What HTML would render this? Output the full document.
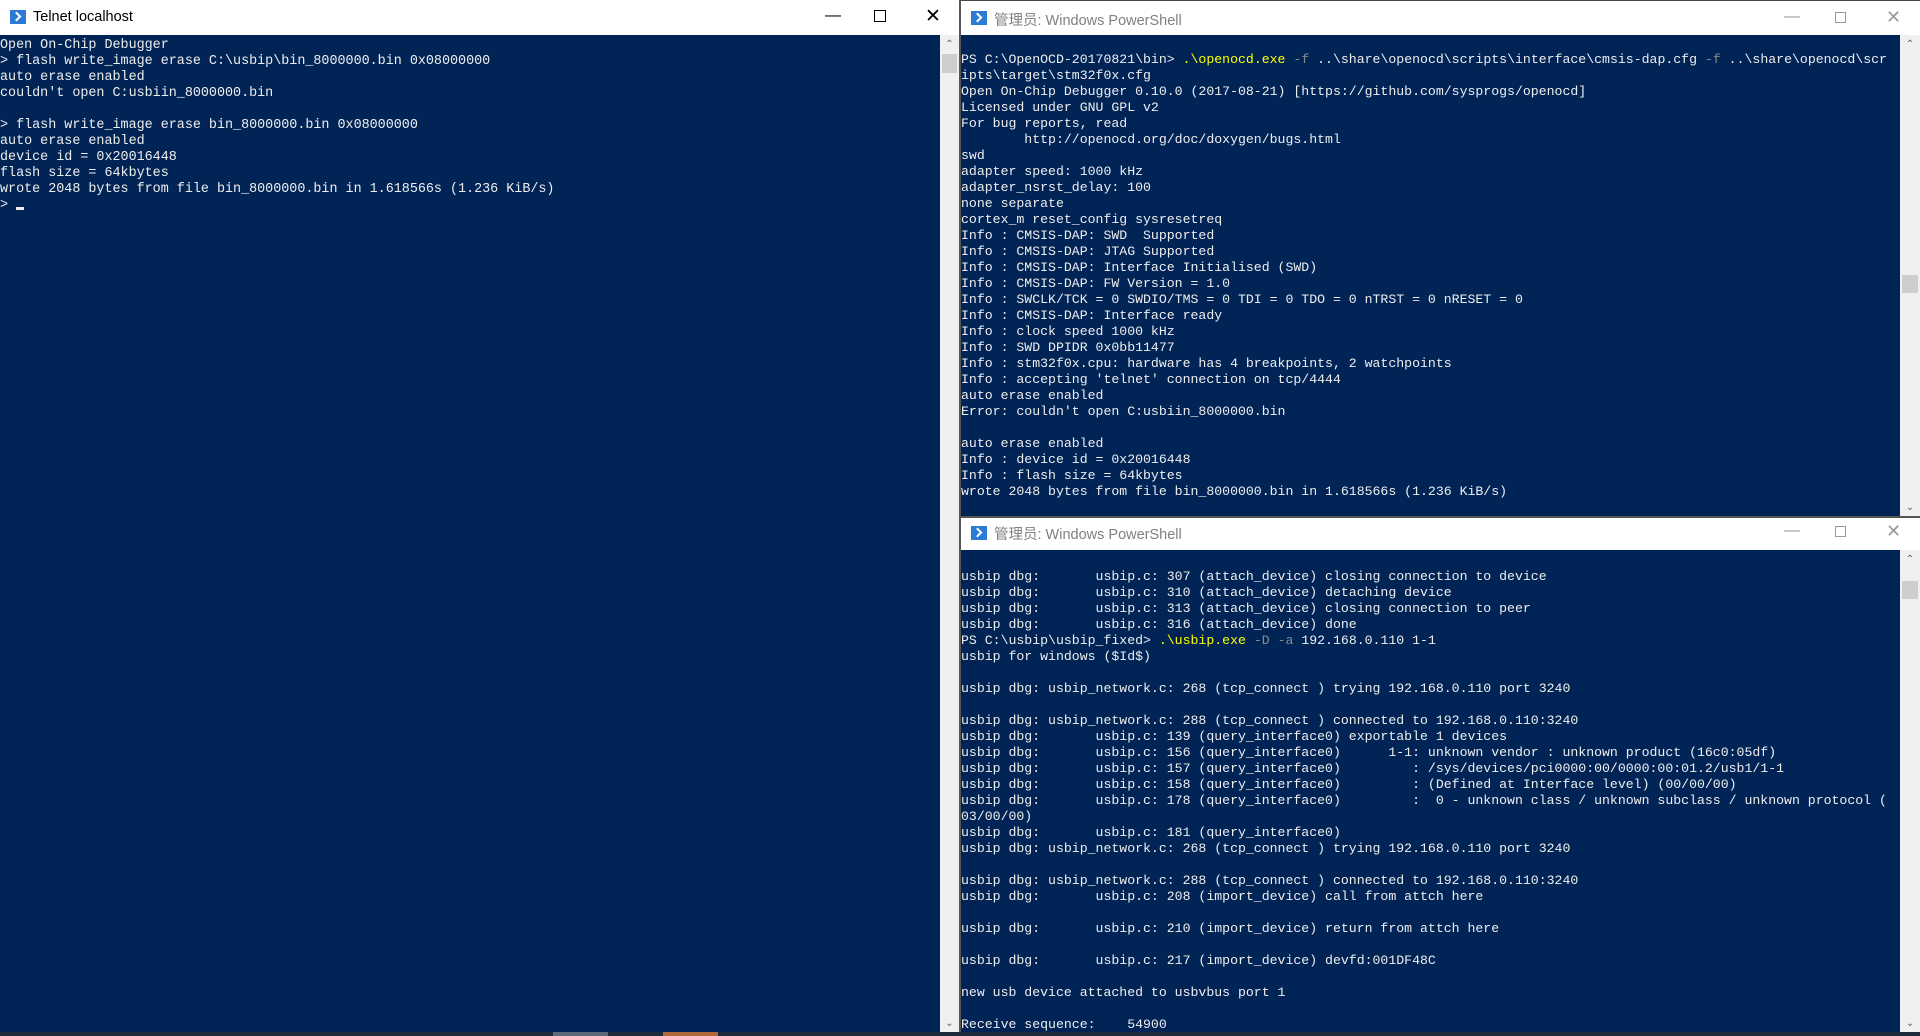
<!DOCTYPE html>
<html><head><meta charset="utf-8"><style>
*{margin:0;padding:0;box-sizing:border-box}
body{width:1920px;height:1036px;overflow:hidden;background:#2b2b2b;position:relative;font-family:"Liberation Sans","Noto Sans CJK SC",sans-serif}
.win{position:absolute;background:#fff}
.title{position:absolute;left:0;right:0;top:0;background:#fff;font-size:14.5px;color:#000}
.title .ic{position:absolute;left:10px;width:16px;height:14px;background:#2a7ad6}
.title .ic:after{content:"";position:absolute;left:3px;top:3px;width:5px;height:5px;border-right:2px solid #fff;border-bottom:2px solid #fff;transform:rotate(-45deg)}
.title .t{position:absolute;left:33px}
.ctl{position:absolute;font-size:16px;color:#000}
.cont{position:absolute;background:#012456;overflow:hidden}
pre{font-family:"Liberation Mono","Noto Sans CJK SC",monospace;color:#eee;line-height:16px;white-space:pre}
.sb{position:absolute;background:#f0f0f0}
.th{position:absolute;background:#cdcdcd;left:2px;right:2px}
.ar{position:absolute;left:0;right:0;text-align:center;font-size:10px;color:#606060}
.y{color:#ffff00}.g{color:#8a8a8a}
</style></head><body>
<div class="win" style="left:0;top:0;width:959px;height:1032px">
 <div class="title" style="height:35px">
  <div class="ic" style="top:10px"></div><div class="t" style="top:9px">Telnet localhost</div>
  <div class="ctl" style="left:825px;top:7px">&#8212;</div>
  <div class="ctl" style="left:874px;top:10px;width:12px;height:12px;border:1.5px solid #000"></div>
  <div class="ctl" style="left:925px;top:5px;font-size:19px">&#10005;</div>
 </div>
 <div class="cont" style="left:0;top:35px;width:940px;height:997px">
<pre style="font-size:13.4px;margin-top:3px">Open On-Chip Debugger
&gt; flash write_image erase C:\usbip\bin_8000000.bin 0x08000000
auto erase enabled
couldn't open C:usbiin_8000000.bin

&gt; flash write_image erase bin_8000000.bin 0x08000000
auto erase enabled
device id = 0x20016448
flash size = 64kbytes
wrote 2048 bytes from file bin_8000000.bin in 1.618566s (1.236 KiB/s)
&gt; <span style="display:inline-block;width:8px;height:3px;background:#eee;vertical-align:-2px"></span></pre>
 </div>
 <div class="sb" style="left:940px;top:35px;width:19px;height:997px">
  <div class="ar" style="top:4px">&#8963;</div><div class="th" style="top:19px;height:19px"></div>
  <div class="ar" style="bottom:3px">&#8964;</div>
 </div>
</div>
<div style="position:absolute;left:959px;top:0;width:2px;height:1032px;background:#555"></div>
<div class="win" style="left:961px;top:0;width:959px;height:516px">
 <div class="title" style="height:35px;border-top:1px solid #444">
  <div class="ic" style="top:10px"></div><div class="t" style="top:8px;color:#808080">管理员: Windows PowerShell</div>
  <div class="ctl" style="left:823px;top:7px;color:#999">&#8212;</div>
  <div class="ctl" style="left:874px;top:11px;width:11px;height:11px;border:1px solid #999"></div>
  <div class="ctl" style="left:925px;top:6px;font-size:18px;color:#999">&#10005;</div>
 </div>
 <div class="cont" style="left:0;top:35px;width:939px;height:481px">
<pre style="font-size:13.2px;margin-top:17px">PS C:\OpenOCD-20170821\bin&gt; <span class="y">.\openocd.exe</span> <span class="g">-f</span> ..\share\openocd\scripts\interface\cmsis-dap.cfg <span class="g">-f</span> ..\share\openocd\scr
ipts\target\stm32f0x.cfg
Open On-Chip Debugger 0.10.0 (2017-08-21) [https://github.com/sysprogs/openocd]
Licensed under GNU GPL v2
For bug reports, read
        http://openocd.org/doc/doxygen/bugs.html
swd
adapter speed: 1000 kHz
adapter_nsrst_delay: 100
none separate
cortex_m reset_config sysresetreq
Info : CMSIS-DAP: SWD  Supported
Info : CMSIS-DAP: JTAG Supported
Info : CMSIS-DAP: Interface Initialised (SWD)
Info : CMSIS-DAP: FW Version = 1.0
Info : SWCLK/TCK = 0 SWDIO/TMS = 0 TDI = 0 TDO = 0 nTRST = 0 nRESET = 0
Info : CMSIS-DAP: Interface ready
Info : clock speed 1000 kHz
Info : SWD DPIDR 0x0bb11477
Info : stm32f0x.cpu: hardware has 4 breakpoints, 2 watchpoints
Info : accepting 'telnet' connection on tcp/4444
auto erase enabled
Error: couldn't open C:usbiin_8000000.bin

auto erase enabled
Info : device id = 0x20016448
Info : flash size = 64kbytes
wrote 2048 bytes from file bin_8000000.bin in 1.618566s (1.236 KiB/s)</pre>
 </div>
 <div class="sb" style="left:939px;top:35px;width:20px;height:481px">
  <div class="ar" style="top:4px">&#8963;</div><div class="th" style="top:240px;height:18px"></div>
  <div class="ar" style="bottom:3px">&#8964;</div>
 </div>
</div>
<div style="position:absolute;left:961px;top:516px;width:959px;height:2px;background:#555"></div>
<div class="win" style="left:961px;top:518px;width:959px;height:514px">
 <div class="title" style="height:32px">
  <div class="ic" style="top:8px"></div><div class="t" style="top:5px;color:#808080">管理员: Windows PowerShell</div>
  <div class="ctl" style="left:823px;top:4px;color:#999">&#8212;</div>
  <div class="ctl" style="left:874px;top:8px;width:11px;height:11px;border:1px solid #999"></div>
  <div class="ctl" style="left:925px;top:3px;font-size:18px;color:#999">&#10005;</div>
 </div>
 <div class="cont" style="left:0;top:32px;width:939px;height:482px">
<pre style="font-size:13.2px;margin-top:19px">usbip dbg:       usbip.c: 307 (attach_device) closing connection to device
usbip dbg:       usbip.c: 310 (attach_device) detaching device
usbip dbg:       usbip.c: 313 (attach_device) closing connection to peer
usbip dbg:       usbip.c: 316 (attach_device) done
PS C:\usbip\usbip_fixed&gt; <span class="y">.\usbip.exe</span> <span class="g">-D -a</span> 192.168.0.110 1-1
usbip for windows ($Id$)

usbip dbg: usbip_network.c: 268 (tcp_connect ) trying 192.168.0.110 port 3240

usbip dbg: usbip_network.c: 288 (tcp_connect ) connected to 192.168.0.110:3240
usbip dbg:       usbip.c: 139 (query_interface0) exportable 1 devices
usbip dbg:       usbip.c: 156 (query_interface0)      1-1: unknown vendor : unknown product (16c0:05df)
usbip dbg:       usbip.c: 157 (query_interface0)         : /sys/devices/pci0000:00/0000:00:01.2/usb1/1-1
usbip dbg:       usbip.c: 158 (query_interface0)         : (Defined at Interface level) (00/00/00)
usbip dbg:       usbip.c: 178 (query_interface0)         :  0 - unknown class / unknown subclass / unknown protocol (
03/00/00)
usbip dbg:       usbip.c: 181 (query_interface0)
usbip dbg: usbip_network.c: 268 (tcp_connect ) trying 192.168.0.110 port 3240

usbip dbg: usbip_network.c: 288 (tcp_connect ) connected to 192.168.0.110:3240
usbip dbg:       usbip.c: 208 (import_device) call from attch here

usbip dbg:       usbip.c: 210 (import_device) return from attch here

usbip dbg:       usbip.c: 217 (import_device) devfd:001DF48C

new usb device attached to usbvbus port 1

Receive sequence:    54900</pre>
 </div>
 <div class="sb" style="left:939px;top:32px;width:20px;height:482px">
  <div class="ar" style="top:4px">&#8963;</div><div class="th" style="top:31px;height:18px"></div>
  <div class="ar" style="bottom:3px">&#8964;</div>
 </div>
</div>
<div style="position:absolute;left:0;top:1032px;width:1920px;height:4px;background:#1c2b3a"></div>
<div style="position:absolute;left:553px;top:1032px;width:55px;height:4px;background:#5a6a7a"></div>
<div style="position:absolute;left:663px;top:1032px;width:55px;height:4px;background:#b06a3a"></div>
</body></html>
